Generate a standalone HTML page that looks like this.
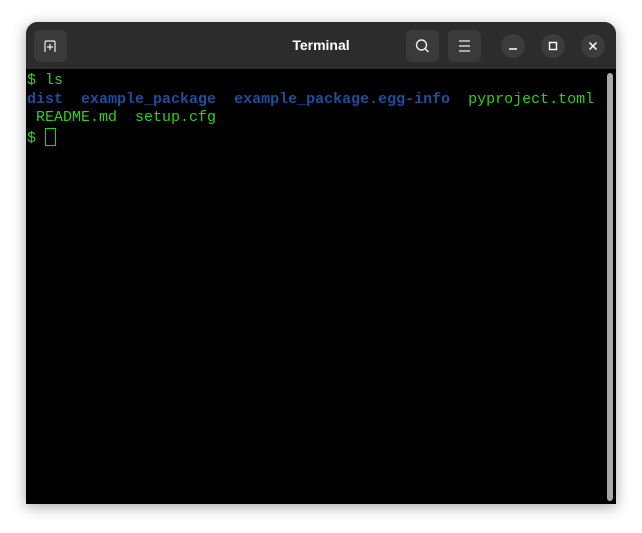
<!DOCTYPE html>
<html><head><style>
body{margin:0;width:642px;height:533px;background:#fff;position:relative;overflow:hidden;font-family:"Liberation Sans",sans-serif}
.win{position:absolute;left:26px;top:22px;width:590px;height:482px;background:#000;border-radius:12px 12px 0 0;box-shadow:0 3px 14px rgba(0,0,0,.35);overflow:hidden}
.tb{position:absolute;left:0;top:0;width:590px;height:47px;background:#2c2c2c}
.btn{position:absolute;top:8px;width:33px;height:32px;border-radius:6px;background:#3a3a3a}
.c{position:absolute;top:12px;width:24px;height:24px;border-radius:50%;background:#3c3c3c}
.title{position:absolute;left:0;width:590px;top:15px;text-align:center;color:#fff;font-weight:bold;font-size:14px}
.term{position:absolute;left:1px;top:50px;font-family:"Liberation Mono",monospace;font-size:15px;line-height:18.5px;color:#2fd01c;white-space:pre}
.b{color:#1e4f9e;font-weight:bold}
.cur{display:inline-block;border:1.5px solid #2fd01c;vertical-align:-4px;box-sizing:border-box;width:11px;height:18px}
.sb{position:absolute;left:581px;top:51px;width:6px;height:428px;background:#a8a8a8;border-radius:3px}
</style></head><body>
<div class="win">
<div class="tb">
<div class="btn" style="left:8px"><svg width="33" height="32"><path d="M11 22V12.5Q11 11 12.5 11h7Q21 11 21 12.5V22M16 14v6M13 17h6" stroke="#eee" stroke-width="1.2" fill="none"/></svg></div>
<div class="title">Terminal</div>
<div class="btn" style="left:380px"><svg width="33" height="32"><circle cx="15.5" cy="15" r="5" stroke="#eee" stroke-width="1.4" fill="none"/><path d="M19 18.5l3.5 3.5" stroke="#eee" stroke-width="1.5"/></svg></div>
<div class="btn" style="left:422px"><svg width="33" height="32"><path d="M11 11h11M11 16h11M11 21h11" stroke="#eee" stroke-width="1.3"/></svg></div>
<div class="c" style="left:475px"><svg width="24" height="24"><path d="M8 15h8" stroke="#fff" stroke-width="1.5"/></svg></div>
<div class="c" style="left:515px"><svg width="24" height="24"><rect x="8.5" y="8.5" width="7" height="7" stroke="#fff" stroke-width="1.4" fill="none"/></svg></div>
<div class="c" style="left:555px"><svg width="24" height="24"><path d="M8.5 8.5l7 7M15.5 8.5l-7 7" stroke="#fff" stroke-width="1.5"/></svg></div>
</div>
<div class="term">$ ls
<span class="b">dist</span>  <span class="b">example_package</span>  <span class="b">example_package.egg-info</span>  pyproject.toml
 README.md  setup.cfg
$ <span class="cur"></span></div>
<div class="sb"></div>
</div>
</body></html>
